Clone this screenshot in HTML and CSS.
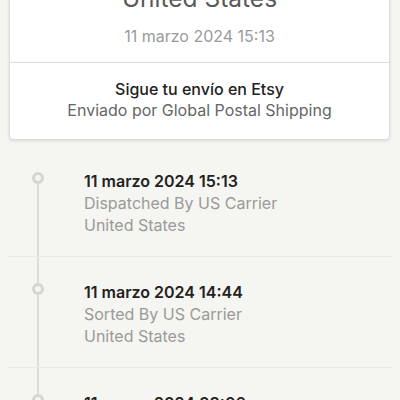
FILE: index.html
```html
<!DOCTYPE html>
<html lang="es">
<head>
    <meta charset="UTF-8">
    <meta name="viewport" content="width=device-width, initial-scale=1.0">
    <title>Seguimiento del envío</title>
    <link rel="stylesheet" href="styles.css">
</head>
<body>
    <!-- tarjeta de estado -->
    <div class="card">
        <div class="card-top">
            <p class="place">United States</p>
            <p class="stamp">11 marzo 2024 15:13</p>
        </div>
        <div class="card-bottom">
            <p class="follow">Sigue tu envío en Etsy</p>
            <p class="carrier">Enviado por Global Postal Shipping</p>
        </div>
    </div>

    <!-- historial -->
    <ul class="track">
        <li class="first">
            <div class="rail"><span class="up"></span><span class="dot"></span><span class="down"></span></div>
            <div class="info">
                <p class="date">11 marzo 2024 15:13</p>
                <p>Dispatched By US Carrier</p>
                <p>United States</p>
            </div>
        </li>
        <li>
            <div class="rail"><span class="up"></span><span class="dot"></span><span class="down"></span></div>
            <div class="info">
                <p class="date">11 marzo 2024 14:44</p>
                <p>Sorted By US Carrier</p>
                <p>United States</p>
            </div>
        </li>
        <li>
            <div class="rail"><span class="up"></span><span class="dot"></span><span class="down"></span></div>
            <div class="info">
                <p class="date">11 marzo 2024 08:06</p>
                <p>Arrived At US Carrier Facility</p>
                <p>United States</p>
            </div>
        </li>
    </ul>
</body>
</html>
```

FILE: styles.css
```css
body { margin: 0; padding: 0; background: #f5f5f1; font-family: "Inter", "Liberation Sans", sans-serif; color: #222; }
p { margin: 0; }
ul { margin: 0; padding: 0; list-style: none; }

.card { margin: -40px 10px 0 9px; background: #fff; border: 1px solid #dcdcd8; border-radius: 0 0 4px 4px; box-shadow: 0 1px 3px rgba(0, 0, 0, .12); text-align: center; }
.card-top { padding: 22px 0 15px; border-bottom: 1px solid #dcdcd8; }
.place { font-size: 24.5px; line-height: 30px; color: #595959; margin-bottom: 12px; }
.stamp { font-size: 16px; line-height: 22px; color: #9a9a9a; }
.card-bottom { padding: 16px 0 18px; }
.follow { font-size: 16px; line-height: 21px; font-weight: 500; color: #222; }
.carrier { font-size: 16px; line-height: 21px; color: #666; }

.track { margin-top: 6px; }
.track li { display: grid; grid-template-columns: 12px 1fr; column-gap: 40px; margin: 0 8px; padding-left: 24px; border-bottom: 1px solid #e9e9e5; }
.rail { display: flex; flex-direction: column; align-items: center; }
.rail .up { width: 2px; height: 26px; background: #dcdcd8; }
.rail .dot { width: 12px; height: 12px; box-sizing: border-box; border: 3px solid #d4d4d0; border-radius: 50%; background: #f5f5f1; }
.rail .down { width: 2px; flex: 1; background: #dcdcd8; }
.track .first .up { background: transparent; }
.info { padding: 24px 0 20px; font-size: 16px; line-height: 22px; color: #9a9a9a; }
.info .date { font-weight: 600; color: #222; }
```
